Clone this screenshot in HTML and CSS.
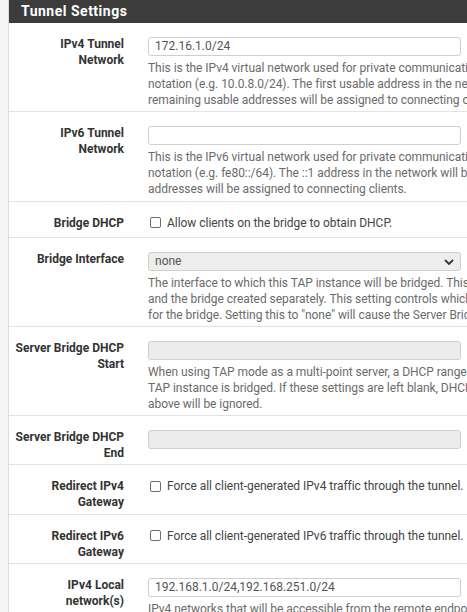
FILE: index.html
```html
<!DOCTYPE html>
<html>
<head>
<meta charset="utf-8">
<link rel="stylesheet" href="styles.css">
</head>
<body>
<div class="panel">
  <div class="panel-heading">Tunnel Settings</div>

  <div class="row">
    <div class="label">IPv4 Tunnel Network</div>
    <div class="control">
      <div class="input">172.16.1.0/24</div>
      <div class="help">
        <div>This is the IPv4 virtual network used for private communications between this server and client hosts expressed using CIDR</div>
        <div>notation (e.g. 10.0.8.0/24). The first usable address in the network will be assigned to the server virtual interface. The</div>
        <div>remaining usable addresses will be assigned to connecting clients.</div>
      </div>
    </div>
  </div>

  <div class="row">
    <div class="label">IPv6 Tunnel Network</div>
    <div class="control">
      <div class="input"></div>
      <div class="help">
        <div>This is the IPv6 virtual network used for private communications between this server and client hosts expressed using CIDR</div>
        <div>notation (e.g. fe80::/64). The ::1 address in the network will be assigned to the server virtual interface. The remaining</div>
        <div>addresses will be assigned to connecting clients.</div>
      </div>
    </div>
  </div>

  <div class="row row-check">
    <div class="label">Bridge DHCP</div>
    <div class="control">
      <div class="check"><span class="box"></span>Allow clients on the bridge to obtain DHCP.</div>
    </div>
  </div>

  <div class="row">
    <div class="label">Bridge Interface</div>
    <div class="control">
      <div class="input select">none
        <svg class="chev" viewBox="0 0 10 6" width="10" height="6"><path d="M1 1 L5 5 L9 1" fill="none" stroke="#333" stroke-width="1.8"/></svg>
      </div>
      <div class="help">
        <div>The interface to which this TAP instance will be bridged. This is not done automatically. This interface must be assigned</div>
        <div>and the bridge created separately. This setting controls which existing IP address and subnet mask are used by OpenVPN</div>
        <div>for the bridge. Setting this to "none" will cause the Server Bridge DHCP settings below to be ignored.</div>
      </div>
    </div>
  </div>

  <div class="row">
    <div class="label">Server Bridge DHCP Start</div>
    <div class="control">
      <div class="input disabled"></div>
      <div class="help">
        <div>When using TAP mode as a multi-point server, a DHCP range may optionally be supplied to use on the interface to which this</div>
        <div>TAP instance is bridged. If these settings are left blank, DHCP will be passed through to the LAN, and the interface setting</div>
        <div>above will be ignored.</div>
      </div>
    </div>
  </div>

  <div class="row">
    <div class="label">Server Bridge DHCP End</div>
    <div class="control">
      <div class="input disabled"></div>
    </div>
  </div>

  <div class="row">
    <div class="label">Redirect IPv4 Gateway</div>
    <div class="control">
      <div class="check"><span class="box"></span>Force all client-generated IPv4 traffic through the tunnel.</div>
    </div>
  </div>

  <div class="row">
    <div class="label">Redirect IPv6 Gateway</div>
    <div class="control">
      <div class="check"><span class="box"></span>Force all client-generated IPv6 traffic through the tunnel.</div>
    </div>
  </div>

  <div class="row">
    <div class="label">IPv4 Local network(s)</div>
    <div class="control">
      <div class="input">192.168.1.0/24,192.168.251.0/24</div>
      <div class="help">
        <div>IPv4 networks that will be accessible from the remote endpoint. Expressed as a comma-separated list of one or more CIDR ranges.</div>
      </div>
    </div>
  </div>
</div>
</body>
</html>
```

FILE: styles.css
```css
html, body {
  margin: 0;
  padding: 0;
}
body {
  width: 467px;
  height: 612px;
  overflow: hidden;
  background: #f5f5f5;
  font-family: Roboto, "Liberation Sans", sans-serif;
  color: #333;
}
.panel {
  margin-left: 8px;
  width: 800px;
  background: #fff;
  border-left: 1px solid #dcdcdc;
}
.panel-heading {
  height: 23px;
  line-height: 23px;
  background: #3c3c3c;
  color: #fff;
  font-weight: bold;
  font-size: 14px;
  letter-spacing: 0.5px;
  padding-left: 12px;
}
.row {
  display: flex;
  border-bottom: 1px solid #e3e3e3;
  padding: 13px 0 3.3px 0;
}
.label {
  width: 110px;
  margin-left: 5px;
  text-align: right;
  font-weight: bold;
  font-size: 12px;
  line-height: 16px;
  color: #333;
  flex: none;
}
.control {
  margin-left: 24px;
  flex: 1;
  font-size: 12px;
  line-height: 16px;
  letter-spacing: -0.04px;
}
.input {
  box-sizing: border-box;
  width: 313px;
  height: 19px;
  margin-top: 1px;
  border: 1px solid #cfcfcf;
  border-radius: 3px;
  background: #fff;
  color: #555;
  font-size: 12px;
  line-height: 17px;
  padding-left: 6px;
  position: relative;
  letter-spacing: 0;
}
.input.disabled {
  background: #ececec;
}
.select {
  background: #ededed;
}
.chev {
  position: absolute;
  right: 6px;
  top: 6px;
}
.help {
  margin-top: 4px;
  color: #6b6b6b;
  white-space: nowrap;
}
.row-check {
  padding-bottom: 6px;
}
.check {
  display: flex;
  align-items: center;
  color: #444;
  height: 16px;
  white-space: nowrap;
}
.box {
  display: inline-block;
  width: 9px;
  height: 9px;
  border: 1px solid #6f6f6f;
  border-radius: 2px;
  margin-left: 2px;
  margin-right: 6px;
}
```
